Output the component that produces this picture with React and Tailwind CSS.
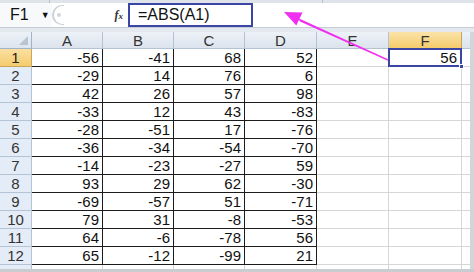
import React from 'react'

const rows = [
  [-56, -41, 68, 52],
  [-29, 14, 76, 6],
  [42, 26, 57, 98],
  [-33, 12, 43, -83],
  [-28, -51, 17, -76],
  [-36, -34, -54, -70],
  [-14, -23, -27, 59],
  [93, 29, 62, -30],
  [-69, -57, 51, -71],
  [79, 31, -8, -53],
  [64, -6, -78, 56],
  [65, -12, -99, 21],
]

const cols = ['A', 'B', 'C', 'D', 'E', 'F']
const gridCols = 'grid grid-cols-[32px_71px_71px_71px_72px_72px_73px_8px_4px]'

const Arrow = () => (
  <svg className="absolute left-0 top-0 pointer-events-none" width="474" height="272">
    {/* shaft, a bit thinner at the tail */}
    <polygon points="388.4,61 387.6,59 298,18 300,21.6" fill="#f030f0" />
    {/* head */}
    <polygon points="284,12 302.5,12.5 296.3,25.6" fill="#f030f0" />
  </svg>
)

export default function App() {
  return (
    <div className="relative w-[474px] h-[272px] overflow-hidden bg-white font-['Liberation_Sans',Arial,sans-serif] text-[#111]">
      {/* ribbon edge */}
      <div className="h-[3px] bg-[#dfe4ea] flex">
        <div className="w-[50px] border-r border-[#b9c2cc]"></div>
        <div className="w-[273px] border-r border-[#b9c2cc]"></div>
      </div>

      {/* formula bar */}
      <div className="h-[25px] flex items-center bg-white border-b border-[#c6ccd4]">
        <div className="w-[52px] h-full flex items-center pl-[10px] bg-[#f7f9fb]">
          <span className="text-[16px] leading-none">F1</span>
          <span className="ml-[12px] text-[9px] leading-none">▼</span>
        </div>
        <div className="w-[12px] h-[20px] rounded-l-full border-l-2 border-t border-b border-[#c9d0d8] bg-white flex items-center justify-center">
          <div className="w-[4px] h-[4px] rounded-full bg-[#d0d6dd]"></div>
        </div>
        <div className="flex-1"></div>
        <span className="mr-[5px] font-['Liberation_Serif',serif] italic font-bold text-[12px] text-[#333] leading-none">
          f<span className="text-[9px]">x</span>
        </span>
        <div className="w-[125px] h-[24px] border-2 border-[#3b45a6] flex items-center pl-[8px]">
          <span className="text-[16px] leading-none">=ABS(A1)</span>
        </div>
        <div className="w-[221px]"></div>
      </div>

      <div className="h-[4px] bg-[#e4e9ef]"></div>

      {/* column headers */}
      <div className={`${gridCols} h-[17px]`}>
        <div className="relative bg-gradient-to-b from-[#edf2f8] to-[#dde4ee] border-r border-b border-[#9fb3ca]">
          <div className="absolute right-[3px] bottom-[3px] w-0 h-0 border-l-[9px] border-l-transparent border-b-[9px] border-b-[#b8c4d2]"></div>
        </div>
        {cols.map((c) => (
          <div
            key={c}
            className={`flex items-center justify-center text-[15px] leading-none border-r border-b ${
              c === 'F'
                ? 'bg-gradient-to-b from-[#fbe3a8] to-[#f5cb6a] border-[#c9a55a] text-[#333]'
                : 'bg-gradient-to-b from-[#edf2f8] to-[#dce3ed] border-[#b4c3d4] text-[#333]'
            }`}
          >
            {c}
          </div>
        ))}
        <div className="bg-gradient-to-b from-[#edf2f8] to-[#dce3ed] border-b border-[#b4c3d4]"></div>
        <div className="bg-[#d2d5d9]"></div>
      </div>

      {/* data rows */}
      {rows.map((r, i) => (
        <div key={i} className={`${gridCols} h-[18px]`}>
          <div
            className={`flex items-center justify-center text-[15px] leading-none border-r border-b ${
              i === 0
                ? 'bg-gradient-to-b from-[#fbe0a0] to-[#f5cc6c] border-[#c9a55a] text-[#222]'
                : 'bg-[#e4ecf7] border-[#b4c3d4] text-[#333]'
            }`}
          >
            {i + 1}
          </div>
          {r.map((v, j) => (
            <div
              key={j}
              className="flex items-center justify-end pr-[3px] text-[15px] leading-none border-r border-b border-[#1c1c1c]"
            >
              {v}
            </div>
          ))}
          <div className="border-r border-b border-[#d6d6d6]"></div>
          {i === 0 ? (
            <div className="relative border-2 border-[#3b45a6] -ml-px -mt-px h-[19px] flex items-center justify-end pr-[3px] text-[15px] leading-none">
              56
              <div className="absolute -right-[4px] -bottom-[4px] w-[5px] h-[5px] bg-[#3b45a6] border border-white"></div>
            </div>
          ) : (
            <div className="border-r border-b border-[#d6d6d6]"></div>
          )}
          <div className="border-b border-[#d6d6d6]"></div>
          <div className="bg-[#d2d5d9]"></div>
        </div>
      ))}

      {/* partial row 13 */}
      <div className={`${gridCols} h-[4px] overflow-hidden`}>
        <div className="bg-[#e4ecf7] border-r border-[#b4c3d4] text-[15px] leading-[18px] text-center text-[#333]">13</div>
        <div className="border-r border-[#d6d6d6]"></div>
        <div className="border-r border-[#d6d6d6]"></div>
        <div className="border-r border-[#d6d6d6]"></div>
        <div className="border-r border-[#d6d6d6]"></div>
        <div className="border-r border-[#d6d6d6]"></div>
        <div className="border-r border-[#d6d6d6]"></div>
        <div></div>
        <div className="bg-[#d2d5d9]"></div>
      </div>
      <div className="h-[3px] bg-[#c9ccd1]"></div>

      <Arrow />
    </div>
  )
}
